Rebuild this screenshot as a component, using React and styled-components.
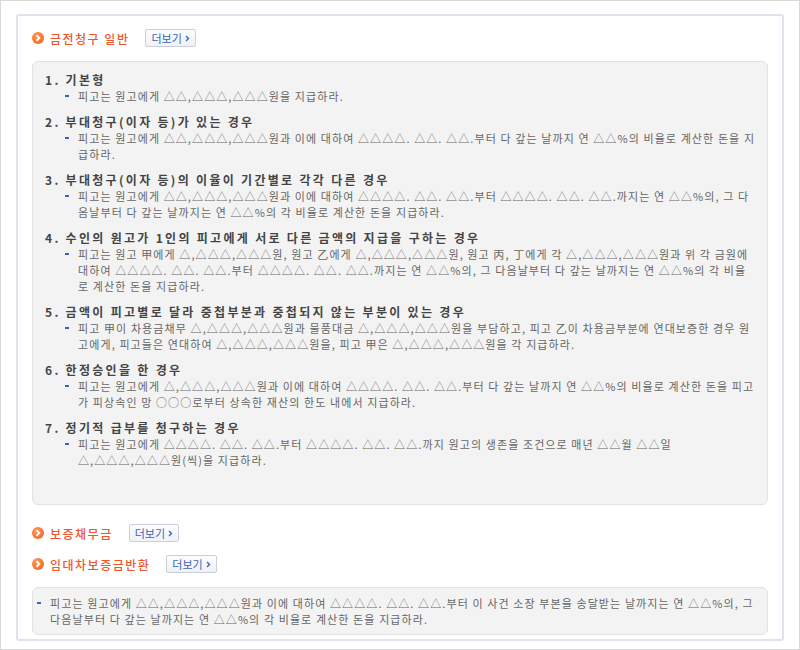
import React from 'react';
import styled, { createGlobalStyle } from 'styled-components';

const Global = createGlobalStyle`
  html, body { margin: 0; padding: 0; background: #fff; }
  body { font-family: "Noto Sans CJK KR", "Noto Sans", sans-serif; }
`;

const Page = styled.div`
  width: 800px;
  height: 650px;
  box-sizing: border-box;
  border: 1px solid #d9d9d9;
  padding: 13px 15px 8px 15px;
  overflow: hidden;
`;

const Panel = styled.div`
  border: 2px solid #dfe3ee;
  border-radius: 3px;
  padding: 12px 14px 8px 14px;
  height: 100%;
  box-sizing: border-box;
  overflow: hidden;
`;

const Heading = styled.div`
  display: flex;
  align-items: center;
  gap: 6px;
  height: 20px;
  margin: ${p => p.$mt || 0}px 0 ${p => p.$mb || 0}px 0;
`;

const Bullet = styled.span`
  width: 12px;
  height: 12px;
  border-radius: 50%;
  background: radial-gradient(circle at 40% 35%, #ff9a5a, #f05a14);
  display: flex;
  align-items: center;
  justify-content: center;
`;

const Title = styled.span`
  color: #f0552a;
  font-size: 12px;
  font-weight: 500;
  letter-spacing: 1.5px;
`;

const MoreBtn = styled.span`
  margin-left: 10px;
  border: 1px solid #c9d0dc;
  border-radius: 2px;
  background: linear-gradient(#fdfdfe, #eef1f6);
  color: #3a64b8;
  font-size: 11px;
  padding: 0 5px;
  height: 16px;
  line-height: 16px;
  display: flex;
  align-items: center;
  gap: 3px;
`;

const Box = styled.div`
  background: #f3f3f3;
  border: 1px solid #e2e2e2;
  border-radius: 6px;
  padding: ${p => p.$pad};
  height: ${p => p.$h || 'auto'};
  box-sizing: border-box;
`;

const Item = styled.div`
  margin-bottom: 9px;
`;

const ItemTitle = styled.div`
  font-size: 12px;
  font-weight: 700;
  color: #444;
  line-height: 17px;
  letter-spacing: 2.3px;
`;

const Line = styled.div`
  display: flex;
  padding-left: ${p => p.$indent || 0}px;
  font-size: 11px;
  color: #666;
  line-height: 16px;
  letter-spacing: 1.1px;
`;

const Dash = styled.span`
  flex: none;
  width: 4px;
  height: 2px;
  background: #3a64b8;
  margin: 7px 9px 0 0;
`;

const Chevron = () => (
  <svg width="8" height="8" viewBox="0 0 8 8"><path d="M2.5 1.2 5.3 4 2.5 6.8" fill="none" stroke="#fff" strokeWidth="1.8" /></svg>
);
const SmallChev = () => (
  <svg width="5" height="7" viewBox="0 0 5 7"><path d="M1 1 3.5 3.5 1 6" fill="none" stroke="#3a64b8" strokeWidth="1.4" /></svg>
);

const items = [
  ['1. 기본형', '피고는 원고에게 △△,△△△,△△△원을 지급하라.'],
  ['2. 부대청구(이자 등)가 있는 경우', '피고는 원고에게 △△,△△△,△△△원과 이에 대하여 △△△△. △△. △△.부터 다 갚는 날까지 연 △△%의 비율로 계산한 돈을 지급하라.'],
  ['3. 부대청구(이자 등)의 이율이 기간별로 각각 다른 경우', '피고는 원고에게 △△,△△△,△△△원과 이에 대하여 △△△△. △△. △△.부터 △△△△. △△. △△.까지는 연 △△%의, 그 다음날부터 다 갚는 날까지는 연 △△%의 각 비율로 계산한 돈을 지급하라.'],
  ['4. 수인의 원고가 1인의 피고에게 서로 다른 금액의 지급을 구하는 경우', '피고는 원고 甲에게 △,△△△,△△△원, 원고 乙에게 △,△△△,△△△원, 원고 丙, 丁에게 각 △,△△△,△△△원과 위 각 금원에 대하여 △△△△. △△. △△.부터 △△△△. △△. △△.까지는 연 △△%의, 그 다음날부터 다 갚는 날까지는 연 △△%의 각 비율로 계산한 돈을 지급하라.'],
  ['5. 금액이 피고별로 달라 중첩부분과 중첩되지 않는 부분이 있는 경우', '피고 甲이 차용금채무 △,△△△,△△△원과 물품대금 △,△△△,△△△원을 부담하고, 피고 乙이 차용금부분에 연대보증한 경우 원고에게, 피고들은 연대하여 △,△△△,△△△원을, 피고 甲은 △,△△△,△△△원을 각 지급하라.'],
  ['6. 한정승인을 한 경우', '피고는 원고에게 △,△△△,△△△원과 이에 대하여 △△△△. △△. △△.부터 다 갚는 날까지 연 △△%의 비율로 계산한 돈을 피고가 피상속인 망 ○○○로부터 상속한 재산의 한도 내에서 지급하라.'],
  ['7. 정기적 급부를 청구하는 경우', '피고는 원고에게 △△△△. △△. △△.부터 △△△△. △△. △△.까지 원고의 생존을 조건으로 매년 △△월 △△일 △,△△△,△△△원(씩)을 지급하라.'],
];

const Head = ({ children, mt, mb }) => (
  <Heading $mt={mt} $mb={mb}>
    <Bullet><Chevron /></Bullet>
    <Title>{children}</Title>
    <MoreBtn>더보기 <SmallChev /></MoreBtn>
  </Heading>
);

export default function App() {
  return (
    <>
      <Global />
      <Page>
        <Panel>
          <Head mb={13}>금전청구 일반</Head>
          <Box $pad="9px 10px 0 12px" $h="444px">
            {items.map(([t, d]) => (
              <Item key={t}>
                <ItemTitle>{t}</ItemTitle>
                <Line $indent={20}><Dash /><span>{d}</span></Line>
              </Item>
            ))}
          </Box>
          <Head mt={18}>보증채무금</Head>
          <Head mt={11} mb={13}>임대차보증금반환</Head>
          <Box $pad="7px 10px 7px 4px">
            <Line><Dash /><span>피고는 원고에게 △△,△△△,△△△원과 이에 대하여 △△△△. △△. △△.부터 이 사건 소장 부본을 송달받는 날까지는 연 △△%의, 그 다음날부터 다 갚는 날까지는 연 △△%의 각 비율로 계산한 돈을 지급하라.</span></Line>
          </Box>
        </Panel>
      </Page>
    </>
  );
}
